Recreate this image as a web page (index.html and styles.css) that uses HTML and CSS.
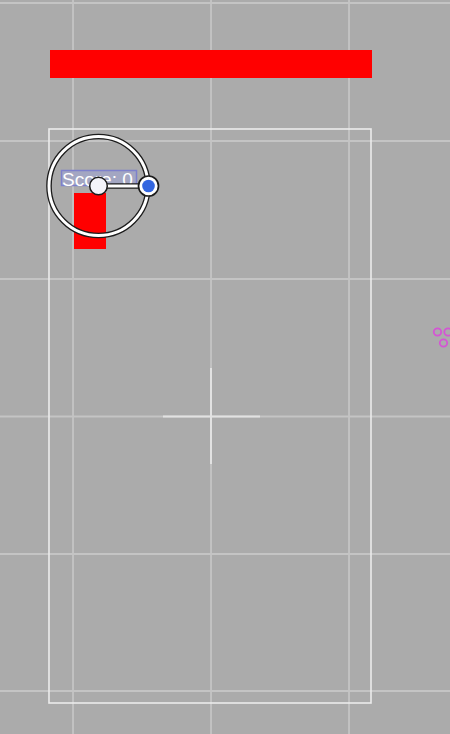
FILE: index.html
```html
<!DOCTYPE html>
<html>
<head>
<meta charset="utf-8">
<link rel="stylesheet" href="styles.css">
</head>
<body>
<div class="scene">
  <svg class="canvas" width="450" height="734" viewBox="0 0 450 734" xmlns="http://www.w3.org/2000/svg">
    <g class="grid">
      <line x1="73" y1="0" x2="73" y2="734"/>
      <line x1="211" y1="0" x2="211" y2="734"/>
      <line x1="349" y1="0" x2="349" y2="734"/>
      <line x1="0" y1="3" x2="450" y2="3"/>
      <line x1="0" y1="141" x2="450" y2="141"/>
      <line x1="0" y1="279" x2="450" y2="279"/>
      <line x1="0" y1="416.5" x2="450" y2="416.5"/>
      <line x1="0" y1="554" x2="450" y2="554"/>
      <line x1="0" y1="691" x2="450" y2="691"/>
    </g>
    <rect class="bar" x="50" y="50" width="322" height="28"/>
    <rect class="frame" x="49" y="129" width="322" height="574"/>
    <g class="cross">
      <line x1="211" y1="368" x2="211" y2="464"/>
      <line x1="163" y1="416.5" x2="260" y2="416.5"/>
    </g>
    <g class="dots">
      <circle cx="437.5" cy="332" r="3.7"/>
      <circle cx="448" cy="332" r="3.7"/>
      <circle cx="443.5" cy="343" r="3.7"/>
    </g>
    <rect class="label-box" x="61.5" y="170.5" width="75" height="15"/>
    <text class="label-text" x="62" y="186">Score: 0</text>
    <rect class="block" x="74" y="193" width="32" height="56"/>
    <circle class="ring-dark" cx="98.5" cy="186" r="49.5"/>
    <circle class="ring-light" cx="98.5" cy="186" r="49.5"/>
    <line class="arm-dark" x1="98.5" y1="186" x2="148" y2="186"/>
    <line class="arm-light" x1="98.5" y1="186" x2="148" y2="186"/>
    <circle class="pivot" cx="98.5" cy="186" r="8.8"/>
    <circle class="knob-outer" cx="148.5" cy="186" r="10"/>
    <circle class="knob-inner" cx="148.5" cy="186" r="6.3"/>
  </svg>
</div>
</body>
</html>
```

FILE: styles.css
```css
html, body {
  margin: 0;
  padding: 0;
  width: 450px;
  height: 734px;
  overflow: hidden;
  background: #ababab;
  font-family: "Liberation Sans", Arial, sans-serif;
}

.scene {
  width: 450px;
  height: 734px;
  background: #ababab;
}

.canvas {
  display: block;
}

.grid line {
  stroke: #c4c4c4;
  stroke-width: 1.8;
}

.bar {
  fill: #ff0000;
}

.frame {
  fill: none;
  stroke: #ececec;
  stroke-width: 1.6;
}

.cross line {
  stroke: #e2e2e2;
  stroke-width: 2;
}

.dots circle {
  fill: none;
  stroke: #d455d4;
  stroke-width: 1.8;
}

.label-box {
  fill: #a3a6c2;
  stroke: #7d80cc;
  stroke-width: 1.5;
}

.label-text {
  fill: #ffffff;
  font-family: "Liberation Sans", Arial, sans-serif;
  font-size: 19px;
}

.block {
  fill: #ff0000;
}

.ring-dark {
  fill: none;
  stroke: #1c1c1c;
  stroke-width: 5.6;
}

.ring-light {
  fill: none;
  stroke: #ffffff;
  stroke-width: 3;
}

.arm-dark {
  stroke: #1c1c1c;
  stroke-width: 5.6;
}

.arm-light {
  stroke: #ffffff;
  stroke-width: 3;
}

.pivot {
  fill: #f4f4fa;
  stroke: #1c1c1c;
  stroke-width: 1.5;
}

.knob-outer {
  fill: #ffffff;
  stroke: #1c1c1c;
  stroke-width: 1.7;
}

.knob-inner {
  fill: #3366e0;
}
```
